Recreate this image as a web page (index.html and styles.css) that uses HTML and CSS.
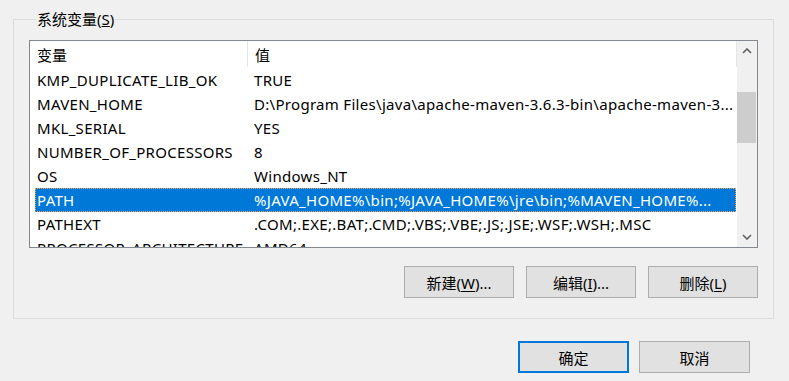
FILE: index.html
```html
<!DOCTYPE html>
<html lang="zh-CN">
<head>
<meta charset="utf-8">
<title>系统变量</title>
<link rel="stylesheet" href="styles.css">
</head>
<body>
<fieldset class="group">
  <legend class="group-title">系统变量(<u>S</u>)</legend>
  <div class="list">
    <div class="list-body">
      <div class="list-header">
        <div class="hcol hcol-name">变量</div>
        <div class="hcol hcol-value">值</div>
      </div>
      <div class="row"><div class="c-name">KMP_DUPLICATE_LIB_OK</div><div class="c-value">TRUE</div></div>
      <div class="row"><div class="c-name">MAVEN_HOME</div><div class="c-value">D:\Program Files\java\apache-maven-3.6.3-bin\apache-maven-3...</div></div>
      <div class="row"><div class="c-name">MKL_SERIAL</div><div class="c-value">YES</div></div>
      <div class="row"><div class="c-name">NUMBER_OF_PROCESSORS</div><div class="c-value">8</div></div>
      <div class="row"><div class="c-name">OS</div><div class="c-value">Windows_NT</div></div>
      <div class="row selected"><div class="c-name">PATH</div><div class="c-value">%JAVA_HOME%\bin;%JAVA_HOME%\jre\bin;%MAVEN_HOME%...</div></div>
      <div class="row"><div class="c-name">PATHEXT</div><div class="c-value">.COM;.EXE;.BAT;.CMD;.VBS;.VBE;.JS;.JSE;.WSF;.WSH;.MSC</div></div>
      <div class="row"><div class="c-name">PROCESSOR_ARCHITECTURE</div><div class="c-value">AMD64</div></div>
    </div>
    <div class="scrollbar">
      <div class="sb-arrow">
        <svg width="10" height="6" viewBox="0 0 10 6"><polyline points="1,5 5,1 9,5" fill="none" stroke="#606060" stroke-width="1.6"/></svg>
      </div>
      <div class="sb-track"><div class="sb-thumb"></div></div>
      <div class="sb-arrow">
        <svg width="10" height="6" viewBox="0 0 10 6"><polyline points="1,1 5,5 9,1" fill="none" stroke="#606060" stroke-width="1.6"/></svg>
      </div>
    </div>
  </div>
  <div class="actions">
    <button class="btn">新建(<u>W</u>)...</button>
    <button class="btn">编辑(<u>I</u>)...</button>
    <button class="btn">删除(<u>L</u>)</button>
  </div>
</fieldset>
<div class="footer">
  <button class="btn btn-primary">确定</button>
  <button class="btn">取消</button>
</div>
</body>
</html>
```
FILE: styles.css
```css
html, body {
  margin: 0;
  padding: 0;
  background: #f0f0f0;
}
body {
  width: 789px;
  height: 381px;
  overflow: hidden;
  font-family: "Noto Sans", "Noto Sans CJK SC", sans-serif;
  font-size: 15px;
  color: #000;
}
.group {
  box-sizing: border-box;
  width: 761px;
  margin: 9px 0 0 13px;
  padding: 11px 15px 20px 15px;
  border: 1px solid #dcdcdc;
}
.group-title {
  padding: 0 1px;
  margin-left: 7px;
  line-height: 20px;
  height: 20px;
}
.list {
  box-sizing: border-box;
  width: 729px;
  height: 208px;
  border: 1px solid #828790;
  background: #fff;
  display: flex;
}
.list-body {
  flex: 1;
  overflow: hidden;
  min-width: 0;
}
.list-header {
  display: flex;
  height: 27px;
}
.hcol {
  box-sizing: border-box;
  padding: 2px 0 0 7px;
  line-height: 25px;
  border-right: 1px solid #e5e5e5;
  height: 26px;
}
.hcol-name {
  width: 218px;
}
.hcol-value {
  flex: 1;
}
.row {
  display: flex;
  height: 24px;
  line-height: 24px;
  margin: 0 1px 0 5px;
  white-space: nowrap;
  letter-spacing: 0.3px;
}
.c-name {
  box-sizing: border-box;
  width: 217px;
  padding-left: 2px;
  overflow: hidden;
}
.c-value {
  flex: 1;
  min-width: 0;
  padding: 0 5px 0 2px;
  overflow: hidden;
}
.row.selected {
  background: #0078d7;
  color: #fff;
  outline: 1px dotted #f3a35a;
  outline-offset: -1px;
}
.scrollbar {
  width: 20px;
  background: #f0f0f0;
  display: flex;
  flex-direction: column;
}
.sb-arrow {
  height: 20px;
  display: flex;
  align-items: center;
  justify-content: center;
}
.sb-track {
  flex: 1;
  padding-top: 31px;
}
.sb-thumb {
  height: 51px;
  margin-right: 1px;
  background: #cdcdcd;
}
.actions {
  display: flex;
  justify-content: flex-end;
  gap: 12px;
  margin-top: 18px;
}
.btn {
  box-sizing: border-box;
  width: 110px;
  height: 32px;
  padding: 0;
  border: 1px solid #adadad;
  background: #e1e1e1;
  font-family: "Noto Sans", "Noto Sans CJK SC", sans-serif;
  font-size: 15px;
  color: #000;
}
.btn u {
  text-underline-offset: 2px;
}
.footer {
  display: flex;
  justify-content: flex-end;
  gap: 10px;
  padding-right: 39px;
  margin-top: 22px;
}
.footer .btn {
  width: 111px;
}
.btn-primary {
  border: 2px solid #0078d7;
}
```
